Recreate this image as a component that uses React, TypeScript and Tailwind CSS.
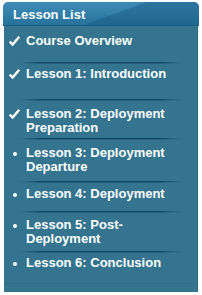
import React from 'react';

type Lesson = {
  title: string;
  done: boolean;
  pad: string;
};

const lessons: Lesson[] = [
  { title: 'Course Overview', done: true, pad: 'pt-[8px] pb-[14px]' },
  { title: 'Lesson 1: Introduction', done: true, pad: 'pt-[3px] pb-[18px]' },
  { title: 'Lesson 2: Deployment Preparation', done: true, pad: 'pt-[6px] pb-[3px]' },
  { title: 'Lesson 3: Deployment Departure', done: false, pad: 'pt-[6px] pb-[7px]' },
  { title: 'Lesson 4: Deployment', done: false, pad: 'pt-[4px] pb-[10px]' },
  { title: 'Lesson 5: Post-Deployment', done: false, pad: 'pt-[5px] pb-[5px]' },
  { title: 'Lesson 6: Conclusion', done: false, pad: 'pt-[3px] pb-[13px]' },
];

const Check = () => (
  <svg width="11" height="10" viewBox="0 0 11 10" className="block">
    <path d="M0.8 5.6 L3.6 8.6 L10.2 0.8" fill="none" stroke="#ffffff" strokeWidth="2.3" strokeLinejoin="miter" />
  </svg>
);

const Separator = () => (
  <div className="mx-[16px]">
    <div className="h-px bg-[linear-gradient(to_right,transparent,#144a67_12%,#144a67_88%,transparent)]" />
    <div className="h-px bg-[linear-gradient(to_right,transparent,#25607b_12%,#25607b_88%,transparent)]" />
  </div>
);

const App: React.FC = () => {
  return (
    <div className="w-[202px] h-[295px] bg-white pt-[2px] font-['Liberation_Sans',Arial,sans-serif]">
      <div className="relative ml-[3px] w-[196px] h-[24px] rounded-t-[5px] overflow-hidden bg-gradient-to-b from-[#3e8bb5] via-[#3380aa] to-[#27719a] border-b border-[#1d5c82]">
        <div className="absolute inset-0 bg-[linear-gradient(160deg,transparent_55%,rgba(24,90,130,0.45)_56%)]" />
        <div className="relative pl-[10px] pt-px leading-[24px] text-[13px] font-bold text-white">Lesson List</div>
      </div>
      <div className="ml-[4px] w-[194px] bg-[#34748f] border-r border-[#2d6a84]">
        {lessons.map((l, i) => (
          <div key={l.title}>
            {i > 0 && <Separator />}
            <div className={`flex ${l.pad}`}>
              <div className="w-[22px] shrink-0 flex pt-[2px] pl-[5px]">
                {l.done ? (
                  <Check />
                ) : (
                  <div className="mt-[4px] ml-[4px] w-[4px] h-[4px] rounded-full bg-white" />
                )}
              </div>
              <div className="pr-[12px] text-[13px] leading-[14px] font-bold text-white">{l.title}</div>
            </div>
          </div>
        ))}
        <div className="h-[9px] border-t border-[#2f6c86] bg-[#35768f]" />
      </div>
    </div>
  );
};

export default App;
